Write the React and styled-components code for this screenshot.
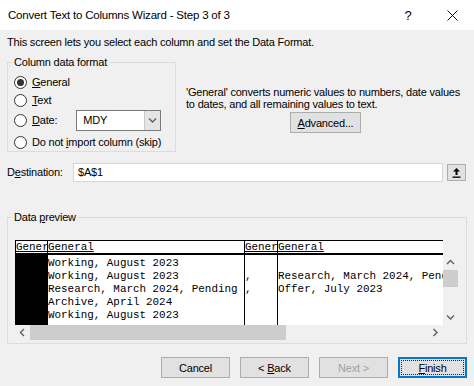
import React from 'react';
import styled, { createGlobalStyle } from 'styled-components';

const Global = createGlobalStyle`
	html, body {
		margin: 0;
		padding: 0;
		background: #f0f0f0;
	}
	body {
		font-family: 'Liberation Sans', Arial, sans-serif;
		font-size: 11px;
		letter-spacing: -0.2px;
		color: #000;
	}
`;

const Window = styled.div`
	width: 474px;
	height: 386px;
	display: flex;
	flex-direction: column;
	background: #f0f0f0;
	overflow: hidden;
`;

const TitleBar = styled.div`
	height: 30px;
	background: #fff;
	display: flex;
	align-items: center;
	padding-left: 8px;
	flex-shrink: 0;
`;

const Title = styled.div`
	flex: 1;
	font-size: 11.5px;
`;

const TitleButton = styled.div`
	width: 44px;
	height: 30px;
	display: flex;
	align-items: center;
	justify-content: center;
	font-size: 13px;
`;

const Body = styled.div`
	display: flex;
	flex-direction: column;
	padding: 5px 7px 0 7px;
`;

const Intro = styled.div`
	line-height: 14px;
`;

const FormatRow = styled.div`
	display: flex;
	margin-top: 6px;
`;

const Group = styled.fieldset`
	margin: 0;
	padding: 0 0 ${(p) => p.$bottom || '0'} 0;
	border: 1px solid #dcdcdc;
	width: ${(p) => p.$width};
	height: ${(p) => p.$height || 'auto'};
	box-sizing: border-box;
	min-width: 0;
	flex-shrink: 0;
`;

const Legend = styled.legend`
	padding: 0 2px;
	margin-left: 4px;
	line-height: 14px;
`;

const RadioList = styled.div`
	display: flex;
	flex-direction: column;
	padding: 4px 0 0 6px;
	white-space: nowrap;
`;

const RadioRow = styled.div`
	display: flex;
	align-items: center;
	height: ${(p) => p.$h || '18px'};
	gap: 5px;
`;

const Radio = styled.span`
	width: 13px;
	height: 13px;
	flex-shrink: 0;
	border-radius: 50%;
	border: 1px solid #333;
	background: #fff;
	box-sizing: border-box;
	display: flex;
	align-items: center;
	justify-content: center;
	&::after {
		content: '';
		width: 7px;
		height: 7px;
		border-radius: 50%;
		background: ${(p) => (p.$checked ? '#333' : 'transparent')};
	}
`;

const Select = styled.div`
	margin-left: 14px;
	width: 85px;
	height: 21px;
	box-sizing: border-box;
	border: 1px solid #7a7a7a;
	background: #fff;
	display: flex;
	align-items: stretch;
`;

const SelectValue = styled.div`
	flex: 1;
	display: flex;
	align-items: center;
	padding-left: 6px;
`;

const SelectArrow = styled.div`
	width: 15px;
	background: #e5e5e5;
	border-left: 1px solid #c8c8c8;
	display: flex;
	align-items: center;
	justify-content: center;
`;

const Describe = styled.div`
	display: flex;
	flex-direction: column;
	align-items: flex-start;
	padding-top: 32px;
	margin-left: 10px;
`;

const DescribeText = styled.div`
	line-height: 11.5px;
	white-space: nowrap;
`;

const Button = styled.div`
	width: ${(p) => p.$width || '69px'};
	height: 21px;
	box-sizing: border-box;
	background: #e1e1e1;
	border: 1px solid ${(p) => (p.$primary ? '#0078d7' : '#adadad')};
	color: ${(p) => (p.$disabled ? '#a0a0a0' : '#000')};
	display: flex;
	align-items: center;
	justify-content: center;
	position: relative;
	${(p) =>
		p.$primary &&
		`
		box-shadow: inset 0 0 0 1px #0078d7;
		&::after {
			content: '';
			position: absolute;
			inset: 2px;
			border: 1px dotted #222;
		}
	`}
`;

const AdvancedButton = styled(Button)`
	margin-top: 2px;
	width: 71px;
	margin-left: 104px;
`;

const DestRow = styled.div`
	display: flex;
	align-items: center;
	margin-top: 10px;
	height: 20px;
`;

const DestLabel = styled.div`
	width: 66px;
`;

const DestInput = styled.div`
	width: 370px;
	height: 19px;
	box-sizing: border-box;
	background: #fff;
	border: 1px solid #d6d6d6;
	display: flex;
	align-items: center;
	padding-left: 4px;
`;

const PickButton = styled.div`
	width: 19px;
	height: 17px;
	margin-left: 4px;
	box-sizing: border-box;
	border: 1px solid #adadad;
	background: #e1e1e1;
	display: flex;
	align-items: center;
	justify-content: center;
`;

const PreviewGroup = styled(Group)`
	margin-top: 28px;
`;

const PreviewFrame = styled.div`
	display: grid;
	grid-template-columns: 428px 15px;
	grid-template-rows: 85px 15px;
	margin: 16px 0 0 7px;
`;

const Table = styled.div`
	display: flex;
	border-left: 1px solid #000;
	border-top: 1px solid #000;
	box-sizing: border-box;
	overflow: hidden;
	font-family: 'Liberation Mono', 'Courier New', monospace;
	font-size: 10.9px;
	letter-spacing: 0;
	grid-column: 1;
	grid-row: 1;
`;

const Column = styled.div`
	width: ${(p) => p.$width};
	flex-shrink: 0;
	display: flex;
	flex-direction: column;
	border-right: ${(p) => (p.$last ? 'none' : '1px solid #000')};
	overflow: hidden;
	${(p) => p.$last && 'flex: 1;'}
`;

const HeaderCell = styled.div`
	height: 12px;
	line-height: 13px;
	background: #fff;
	border-bottom: 2px solid #000;
	text-decoration: underline;
	white-space: nowrap;
	overflow: hidden;
`;

const Cells = styled.div`
	flex: 1;
	background: ${(p) => (p.$selected ? '#000' : '#fff')};
	color: ${(p) => (p.$selected ? '#fff' : '#000')};
	padding-top: 2px;
`;

const Cell = styled.div`
	height: 13px;
	line-height: 13px;
	white-space: nowrap;
`;

const VScroll = styled.div`
	grid-column: 2;
	grid-row: 1;
	margin-top: 15px;
	display: flex;
	flex-direction: column;
	align-items: center;
	background: #f0f0f0;
`;

const ScrollArrow = styled.div`
	width: 15px;
	height: 15px;
	display: flex;
	align-items: center;
	justify-content: center;
`;

const VThumb = styled.div`
	width: 15px;
	height: 17px;
	background: #cdcdcd;
`;

const HScroll = styled.div`
	grid-column: 1;
	grid-row: 2;
	display: flex;
	align-items: center;
	background: #f0f0f0;
`;

const HThumb = styled.div`
	width: 256px;
	height: 15px;
	background: #cdcdcd;
`;

const Spacer = styled.div`
	flex: 1;
`;

const ButtonRow = styled.div`
	display: flex;
	justify-content: flex-end;
	gap: 10px;
	margin-top: 13px;
`;

const Key = styled.span`
	text-decoration: underline;
`;

const Chevron = ({ dir }) => {
	const paths = {
		up: 'M1 5 L4.5 1.5 L8 5',
		down: 'M1 1.5 L4.5 5 L8 1.5',
		left: 'M5 1 L1.5 4.5 L5 8',
		right: 'M1.5 1 L5 4.5 L1.5 8',
	};
	const vertical = dir === 'up' || dir === 'down';
	return (
		<svg
			width={vertical ? 9 : 7}
			height={vertical ? 7 : 9}
			viewBox={vertical ? '0 0 9 7' : '0 0 7 9'}
		>
			<path d={paths[dir]} fill="none" stroke="#606060" strokeWidth="1.4" />
		</svg>
	);
};

const rows = [
	['Working, August 2023', '', ''],
	['Working, August 2023', ',', 'Research, March 2024, Pending'],
	['Research, March 2024, Pending', ',', 'Offer, July 2023'],
	['Archive, April 2024', '', ''],
	['Working, August 2023', '', ''],
];

const columns = [
	{ header: 'Gener', width: '31px', selected: true },
	{ header: 'General', width: '196px' },
	{ header: 'Gener', width: '32px' },
	{ header: 'General', width: 'auto', last: true },
];

export default function App() {
	return (
		<Window>
			<Global />
			<TitleBar>
				<Title>Convert Text to Columns Wizard - Step 3 of 3</Title>
				<TitleButton>?</TitleButton>
				<TitleButton>
					<svg width="11" height="11" viewBox="0 0 11 11">
						<path d="M0.5 0.5 L10.5 10.5 M10.5 0.5 L0.5 10.5" stroke="#111" strokeWidth="1" />
					</svg>
				</TitleButton>
			</TitleBar>
			<Body>
				<Intro>This screen lets you select each column and set the Data Format.</Intro>
				<FormatRow>
					<Group $width="169px" $height="97px">
						<Legend>Column data format</Legend>
						<RadioList>
							<RadioRow>
								<Radio $checked />
								<span>
									<Key>G</Key>eneral
								</span>
							</RadioRow>
							<RadioRow>
								<Radio />
								<span>
									<Key>T</Key>ext
								</span>
							</RadioRow>
							<RadioRow $h="22px">
								<Radio />
								<span>
									<Key>D</Key>ate:
								</span>
								<Select>
									<SelectValue>MDY</SelectValue>
									<SelectArrow>
										<Chevron dir="down" />
									</SelectArrow>
								</Select>
							</RadioRow>
							<RadioRow $h="22px">
								<Radio />
								<span>
									Do not <Key>i</Key>mport column (skip)
								</span>
							</RadioRow>
						</RadioList>
					</Group>
					<Describe>
						<DescribeText>
							'General' converts numeric values to numbers, date values
							<br />
							to dates, and all remaining values to text.
						</DescribeText>
						<AdvancedButton>
							<span>
								<Key>A</Key>dvanced...
							</span>
						</AdvancedButton>
					</Describe>
				</FormatRow>
				<DestRow>
					<DestLabel>
						D<Key>e</Key>stination:
					</DestLabel>
					<DestInput>$A$1</DestInput>
					<PickButton>
						<svg width="9" height="11" viewBox="0 0 9 11">
							<path d="M4.5 1 L1 4.5 L3.5 4.5 L3.5 8 L5.5 8 L5.5 4.5 L8 4.5 Z" fill="#000" />
							<rect x="0.5" y="9.5" width="8" height="1.3" fill="#000" />
						</svg>
					</PickButton>
				</DestRow>
				<PreviewGroup $width="460px" $bottom="3px">
					<Legend>
						Data <Key>p</Key>review
					</Legend>
					<PreviewFrame>
						<Table>
							{columns.map((col, ci) => (
								<Column key={ci} $width={col.width} $last={col.last}>
									<HeaderCell>{col.header}</HeaderCell>
									<Cells $selected={col.selected}>
										{ci > 0 &&
											rows.map((r, ri) => <Cell key={ri}>{r[ci - 1]}</Cell>)}
									</Cells>
								</Column>
							))}
						</Table>
						<VScroll>
							<ScrollArrow>
								<Chevron dir="up" />
							</ScrollArrow>
							<VThumb />
							<Spacer />
							<ScrollArrow>
								<Chevron dir="down" />
							</ScrollArrow>
						</VScroll>
						<HScroll>
							<ScrollArrow>
								<Chevron dir="left" />
							</ScrollArrow>
							<HThumb />
							<Spacer />
							<ScrollArrow>
								<Chevron dir="right" />
							</ScrollArrow>
						</HScroll>
					</PreviewFrame>
				</PreviewGroup>
				<ButtonRow>
					<Button>Cancel</Button>
					<Button>
						<span>
							&lt; <Key>B</Key>ack
						</span>
					</Button>
					<Button $disabled>Next &gt;</Button>
					<Button $primary>
						<span>
							<Key>F</Key>inish
						</span>
					</Button>
				</ButtonRow>
			</Body>
		</Window>
	);
}
